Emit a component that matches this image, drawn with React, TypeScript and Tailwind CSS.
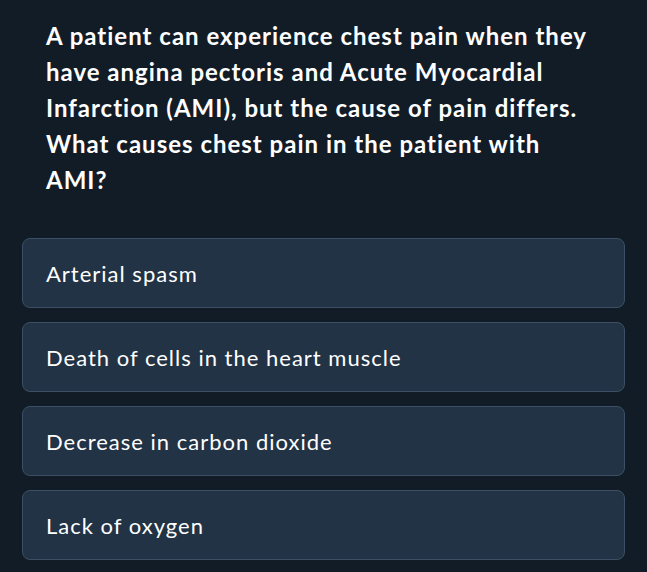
import React from 'react';

const options = [
  'Arterial spasm',
  'Death of cells in the heart muscle',
  'Decrease in carbon dioxide',
  'Lack of oxygen',
];

export default function App() {
  return (
    <div className="w-[647px] h-[572px] bg-[#121c27] overflow-hidden" style={{ fontFamily: 'Lato, "Noto Sans", sans-serif' }}>
      <div className="px-[46px] pt-[18px]">
        <p className="text-[24px] leading-[36px] font-bold tracking-[1px] text-white">
          A patient can experience chest pain when they
          <br />
          have angina pectoris and Acute Myocardial
          <br />
          Infarction (AMI), but the cause of pain differs.
          <br />
          What causes chest pain in the patient with
          <br />
          AMI?
        </p>
      </div>

      <div className="mt-[40px] px-[22px] flex flex-col gap-[14px]">
        {options.map((opt) => (
          <button
            key={opt}
            className="w-[603px] h-[70px] flex items-center px-[23px] bg-[#213345] border border-[#3b5064] rounded-[8px] text-left text-[22px] tracking-[1px] text-white"
          >
            {opt}
          </button>
        ))}
      </div>
    </div>
  );
}
